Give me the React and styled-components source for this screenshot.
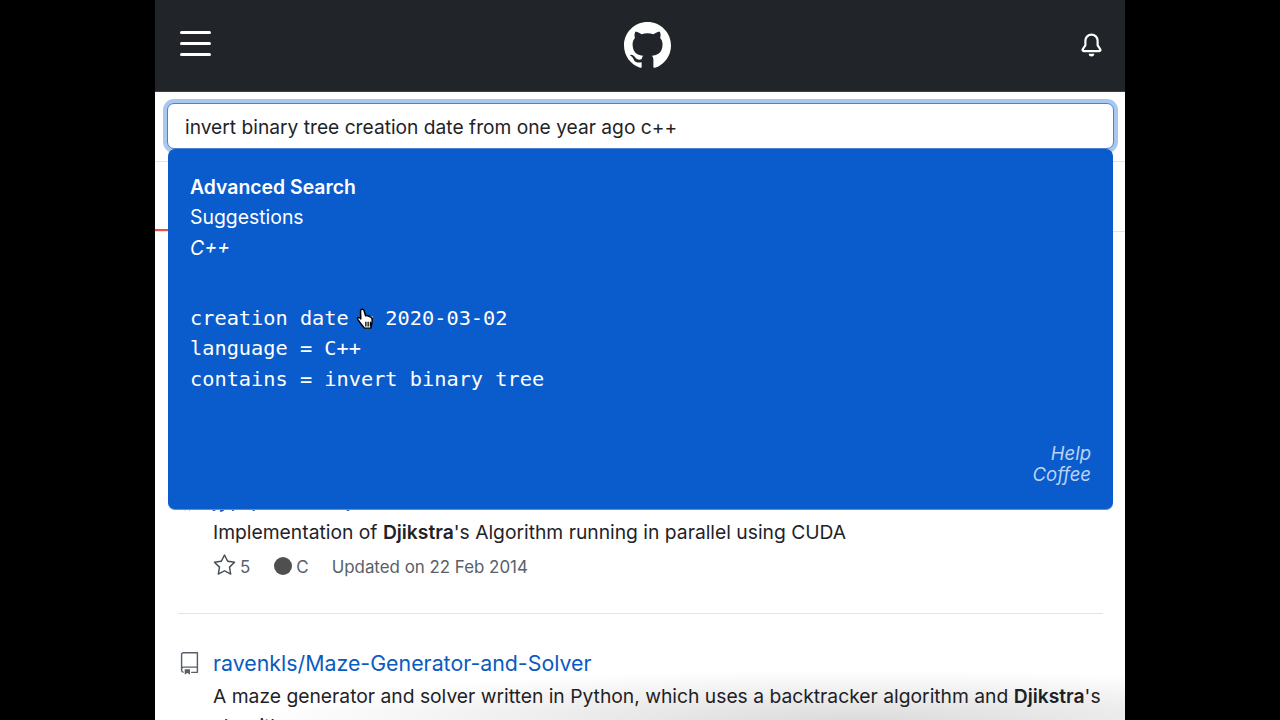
import styled, { createGlobalStyle } from 'styled-components';
import { GoRepo, GoStar } from 'react-icons/go';

const GlobalStyles = createGlobalStyle`
  html, body {
    margin: 0;
    height: 100%;
    background: #000;
    overflow: hidden;
  }
  * { box-sizing: border-box; }
`;

const ink = '#1f2327';
const sans = 'Inter, "Liberation Sans", sans-serif';

function App() {
  return (
    <Wrapper>
      <GlobalStyles />
      <Page>
        <Header>
          <MenuButton><span /><span /><span /></MenuButton>
          <Logo viewBox="0 0 16 16">
            <path fillRule="evenodd" d="M8 0C3.58 0 0 3.58 0 8c0 3.54 2.29 6.53 5.47 7.59.4.07.55-.17.55-.38 0-.19-.01-.82-.01-1.49-2.01.37-2.53-.49-2.69-.94-.09-.23-.48-.94-.82-1.13-.28-.15-.68-.52-.01-.53.63-.01 1.08.58 1.23.82.72 1.21 1.87.87 2.33.66.07-.52.28-.87.51-1.07-1.78-.2-3.64-.89-3.64-3.95 0-.87.31-1.59.82-2.15-.08-.2-.36-1.02.08-2.12 0 0 .67-.21 2.2.82.64-.18 1.32-.27 2-.27.68 0 1.36.09 2 .27 1.53-1.04 2.2-.82 2.2-.82.44 1.1.16 1.92.08 2.12.51.56.82 1.27.82 2.15 0 3.07-1.87 3.75-3.65 3.95.29.25.54.73.54 1.48 0 1.07-.01 1.93-.01 2.2 0 .21.15.46.55.38A8.013 8.013 0 0016 8c0-4.42-3.58-8-8-8z" />
          </Logo>
          <Bell viewBox="0 0 16 16">
            <path d="M8 16a2 2 0 001.985-1.75c.017-.137-.097-.25-.235-.25h-3.5c-.138 0-.252.113-.235.25A2 2 0 008 16z" />
            <path fillRule="evenodd" d="M8 1.5A3.5 3.5 0 004.5 5v2.947c0 .346-.102.683-.294.97l-1.703 2.556a.018.018 0 00-.003.01l.001.006c0 .002.002.004.004.006a.017.017 0 00.006.004l.007.001h10.964l.007-.001a.018.018 0 00.006-.004.016.016 0 00.004-.006l.001-.007a.017.017 0 00-.003-.01l-1.703-2.554a1.75 1.75 0 01-.294-.97V5A3.5 3.5 0 008 1.5zM3 5a5 5 0 0110 0v2.947c0 .05.015.098.042.139l1.703 2.555A1.518 1.518 0 0113.482 13H2.518a1.518 1.518 0 01-1.263-2.36l1.703-2.554A.25.25 0 003 7.947V5z" />
          </Bell>
        </Header>

        <SearchBar>
          <SearchInput>invert binary tree creation date from one year ago c++</SearchInput>
          <Dropdown>
            <Suggestions>
              <strong>Advanced Search</strong>
              <span>Suggestions</span>
              <em>C++</em>
            </Suggestions>
            <Query>
              <span>creation date = 2020-03-02</span>
              <span>language = C++</span>
              <span>contains = invert binary tree</span>
            </Query>
            <HelpLinks>
              <span>Help</span>
              <span>Coffee</span>
            </HelpLinks>
            <Cursor viewBox="0 0 16 20">
              <path d="M4.6 1.2c.9-.5 1.8 0 2.1 1l1.4 4.6.5-.2c.8-.2 1.4 0 1.7.6.7-.3 1.4-.1 1.7.6.8-.2 1.4.2 1.6 1 .4 1.7.3 3.5-.2 5.1l-.8 3.6H7.1L3.5 13 1.3 9.9c-.5-.8 0-1.6.8-1.6.6 0 1.2.4 1.8 1.2L3.7 2.9c-.1-.7.2-1.4.9-1.700z" fill="#fff" stroke="#000" strokeWidth="1.3" strokeLinejoin="round" />
              <path d="M8.3 12v4M10.3 12v4M12.3 12v4" stroke="#000" strokeWidth="1.1" fill="none" />
            </Cursor>
          </Dropdown>
        </SearchBar>

        <Tabs />

        <Results>
          <ResultsSummary>Repository results</ResultsSummary>
          <Result>
            <Title><GoRepo />jyp/parallel-djikstra-cuda</Title>
            <Description>Implementation of <b>Djikstra</b>'s Algorithm running in parallel using CUDA</Description>
            <Meta>
              <Stars><GoStar />5</Stars>
              <Language><Dot />C</Language>
              <span>Updated on 22 Feb 2014</span>
            </Meta>
          </Result>
          <Result>
            <Title><GoRepo /><a>ravenkls/Maze-Generator-and-Solver</a></Title>
            <Description>A maze generator and solver written in Python, which uses a backtracker algorithm and <b>Djikstra</b>'s algorithm</Description>
          </Result>
        </Results>
        <Vignette />
      </Page>
    </Wrapper>
  );
}

const Wrapper = styled.div`
  width: 100%;
  height: 720px;
  display: flex;
  justify-content: center;
  font-family: ${sans};
`;

const Page = styled.div`
  width: 970px;
  height: 720px;
  position: relative;
  overflow: hidden;
  background: #fff;
  color: ${ink};
`;

const Header = styled.header`
  height: 92px;
  background: #212429;
  border-bottom: 1px solid #3a3d41;
  position: relative;
  display: flex;
  align-items: center;
  justify-content: space-between;
  padding: 0 22px 4px 25px;
`;

const MenuButton = styled.div`
  width: 31px;
  display: flex;
  flex-direction: column;
  gap: 8px;
  span {
    display: block;
    height: 3px;
    border-radius: 2px;
    background: #fff;
  }
`;

const Logo = styled.svg`
  width: 47px;
  height: 47px;
  fill: #fff;
  position: absolute;
  left: 469px;
  top: 22px;
`;

const Bell = styled.svg`
  width: 23px;
  height: 26px;
  fill: #fff;
  margin-top: 2px;
`;

const SearchBar = styled.div`
  padding: 11px 11px 12px 12px;
  border-bottom: 1px solid #e1e4e8;
  position: relative;
`;

const SearchInput = styled.div`
  height: 46px;
  padding: 2px 17px 0;
  display: flex;
  align-items: center;
  font-size: 19.2px;
  color: ${ink};
  background: #fff;
  border: 1px solid #4f80cf;
  border-radius: 7px;
  box-shadow: 0 0 0 4px #a9c8f0;
`;

const Dropdown = styled.div`
  position: absolute;
  left: 13px;
  top: 57px;
  width: 945px;
  height: 361px;
  padding: 23px 22px;
  background: #0a5bcb;
  border-radius: 7px;
  border-bottom: 1px solid #5a8fdc;
  color: #fff;
  z-index: 2;
`;

const Suggestions = styled.div`
  display: flex;
  flex-direction: column;
  font-size: 19.4px;
  line-height: 30.4px;
  strong { font-weight: 600; }
`;

const Query = styled.div`
  margin-top: 40px;
  display: flex;
  flex-direction: column;
  font-family: "DejaVu Sans Mono", monospace;
  font-size: 20.3px;
  line-height: 30.2px;
`;

const HelpLinks = styled.div`
  position: absolute;
  right: 22px;
  bottom: 24px;
  display: flex;
  flex-direction: column;
  align-items: flex-end;
  font-style: italic;
  font-size: 18.5px;
  line-height: 21px;
  color: #b9d3f5;
`;

const Cursor = styled.svg`
  position: absolute;
  left: 188px;
  top: 159px;
  width: 19px;
  height: 23px;
`;

const Tabs = styled.div`
  height: 70px;
  border-bottom: 1px solid #e1e4e8;
  position: relative;
  &::after {
    content: '';
    position: absolute;
    left: 0;
    bottom: 0;
    width: 120px;
    height: 2px;
    background: #e5533d;
  }
`;

const Results = styled.div`
  padding: 0 22px 0 23px;
`;

const ResultsSummary = styled.h3`
  height: 217px;
  margin: 0;
  padding-top: 20px;
  font-size: 20px;
  font-weight: 600;
`;

const Result = styled.article`
  padding: 33px 0 31px 35px;
  border-top: 1px solid #e1e4e8;
`;

const Title = styled.div`
  position: relative;
  font-size: 21.35px;
  line-height: 33px;
  color: #0a5bc0;
  svg {
    position: absolute;
    left: -35px;
    top: 5px;
    width: 23px;
    height: 23px;
    color: #57606a;
  }
`;

const Description = styled.p`
  margin: 1px 0 0;
  font-size: 19.28px;
  line-height: 30px;
  color: ${ink};
  b { font-weight: 600; }
`;

const Meta = styled.div`
  margin-top: 5px;
  height: 30px;
  display: flex;
  align-items: center;
  font-size: 16.9px;
  color: #586069;
  gap: 23px;
`;

const Stars = styled.span`
  display: flex;
  align-items: center;
  gap: 4px;
  svg { width: 23px; height: 23px; color: #444d56; margin-top: -4px; }
`;

const Language = styled.span`
  display: flex;
  align-items: center;
  gap: 4px;
`;

const Dot = styled.i`
  width: 18px;
  height: 18px;
  margin-left: 1px;
  border-radius: 50%;
  background: #4f4f4f;
  margin-top: -2px;
`;

const Vignette = styled.div`
  position: absolute;
  inset: auto 0 0 0;
  height: 50px;
  pointer-events: none;
  z-index: 3;
  background: radial-gradient(ellipse 62% 50px at 72% 100%, rgba(0,0,0,.14), rgba(0,0,0,0));
`;

export default App;
